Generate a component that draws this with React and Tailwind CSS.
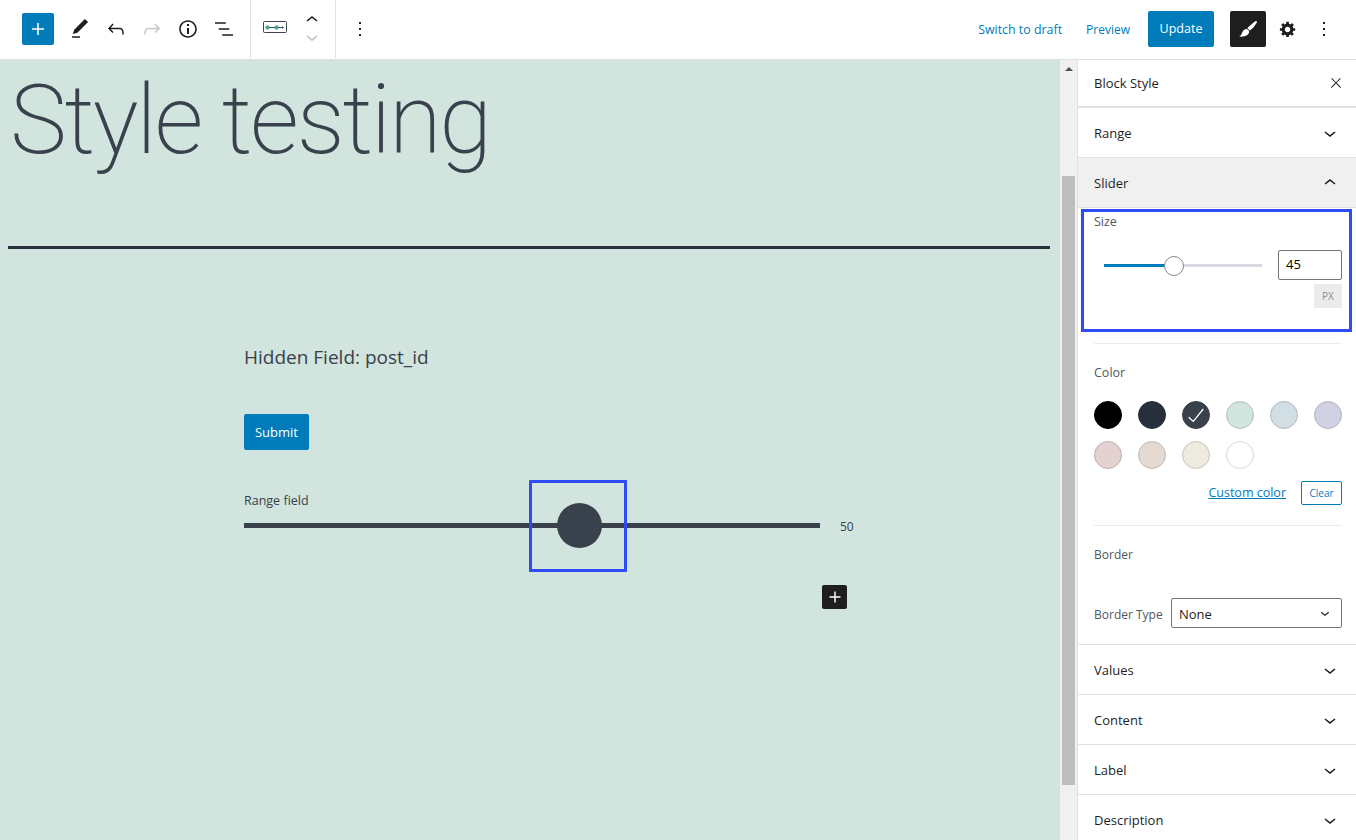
import React from 'react';

const paths = {
  plus: 'M18 11.2h-5.2V6h-1.6v5.2H6v1.6h5.2V18h1.6v-5.2H18z',
  edit: 'M20.1 5.1L16.9 2 6.2 12.7l-1.3 4.4 4.5-1.3L20.1 5.1zM4 20.8h8v-1.5H4v1.5z',
  undo: 'M18.3 11.7c-.6-.6-1.4-.9-2.3-.9H6.7l2.9-3.3-1.1-1-4.5 5L8.5 16l1-1-2.7-2.7H16c.5 0 .9.2 1.3.5 1 1 1 3.4 1 4.5v.3h1.5v-.2c0-1.5 0-4.3-1.5-5.7z',
  redo: 'M15.6 6.5l-1.1 1 2.9 3.3H8c-.9 0-1.7.3-2.3.9-1.4 1.5-1.4 4.2-1.4 5.6v.2h1.5v-.3c0-1.1 0-3.5 1-4.5.3-.3.7-.5 1.3-.5h9.2L14.5 15l1.1 1.1 4.6-4.6-4.6-5z',
  info: 'M12 3.2c-4.8 0-8.8 3.9-8.8 8.8 0 4.8 3.9 8.8 8.8 8.8 4.8 0 8.8-3.9 8.8-8.8 0-4.8-4-8.8-8.8-8.8zm0 16c-4 0-7.2-3.3-7.2-7.2C4.8 8 8 4.8 12 4.8s7.2 3.3 7.2 7.2c0 4-3.2 7.2-7.2 7.2zM11 17h2v-6h-2v6zm0-8h2V7h-2v2z',
  list: 'M13.8 5.2H3v1.5h10.8V5.2zm-3.6 12v1.5H21v-1.5H10.2zm7.2-6H6.6v1.5h10.8v-1.5z',
  more: 'M13 19h-2v-2h2v2zm0-6h-2v-2h2v2zm0-6h-2V5h2v2z',
  down: 'M17.5 11.6L12 16l-5.5-4.4.9-1.2L12 14l4.5-3.6 1 1.2z',
  up: 'M6.5 12.4L12 8l5.5 4.4-.9 1.2L12 10l-4.5 3.6-1-1.2z',
  close: 'M13 11.8l6.1-6.3-1-1-6.1 6.2-6.1-6.2-1 1 6.1 6.3-6.5 6.7 1 1 6.5-6.6 6.5 6.6 1-1z',
};

function Icon({ name, className = 'w-6 h-6' }) {
  return (
    <svg viewBox="0 0 24 24" className={`fill-current shrink-0 ${className}`}>
      <path d={paths[name]} />
    </svg>
  );
}

function Gear() {
  return (
    <svg viewBox="0 0 20 20" className="w-[18px] h-[18px] fill-current shrink-0">
      <path d="M18 12h-2.18c-.17.7-.44 1.35-.81 1.93l1.54 1.54-2.1 2.1-1.54-1.54c-.58.36-1.23.63-1.91.79V19H8v-2.18c-.68-.16-1.33-.43-1.91-.79l-1.54 1.54-2.12-2.12 1.54-1.54c-.36-.58-.63-1.23-.79-1.91H1V9.03h2.17c.16-.7.44-1.35.8-1.94L2.43 5.55l2.1-2.1 1.54 1.54c.58-.37 1.24-.64 1.93-.81V2h3v2.18c.68.16 1.33.43 1.91.79l1.54-1.54 2.12 2.12-1.54 1.54c.36.59.64 1.24.8 1.94H18V12zm-8.5 1.5c1.66 0 3-1.34 3-3s-1.34-3-3-3-3 1.34-3 3 1.34 3 3 3z" />
    </svg>
  );
}

function Brush() {
  return (
    <svg viewBox="0 0 18 16" className="w-[18px] h-4 shrink-0">
      <path d="M17.6.3c.5.4.4 1.1 0 1.7-1.4 2.3-4 5.6-6.7 7.6L8.3 7.2C10.6 4.5 14 1.7 16 .4c.6-.3 1.2-.4 1.6-.1z" fill="#fff" />
      <path d="M7.6 8c1.3.4 2.3 1.4 2.5 2.6.2 2.6-2.5 5.4-9.9 5.1 1.7-.8 2.1-2 2.7-3.6.7-2 2.5-4.4 4.7-4.1z" fill="#fff" />
    </svg>
  );
}

function RangeBlockIcon() {
  return (
    <svg viewBox="0 0 24 12" className="w-6 h-3 shrink-0">
      <rect x="0.5" y="0.5" width="23" height="11" rx="1" fill="none" stroke="#3a4452" />
      <path d="M4 6.5h16" stroke="#3a4452" strokeWidth="1" />
      <path d="M19 5l2 1.5-2 1.5z" fill="#3a4452" />
      <circle cx="4.5" cy="6.5" r="1.8" fill="#2fc9a0" stroke="#3a4452" strokeWidth="0.5" />
      <circle cx="13.5" cy="6.5" r="1.8" fill="#2fc9a0" stroke="#3a4452" strokeWidth="0.5" />
    </svg>
  );
}

function PanelRow({ title, open }) {
  return (
    <div className={`h-[50px] shrink-0 flex items-center justify-between pl-4 pr-[14px] border-b border-[#e0e0e0] text-[13px] font-medium text-[#1e1e1e] ${open ? 'bg-[#f0f0f0]' : 'bg-white'}`}>
      <span className="mt-[2px]">{title}</span>
      <Icon name={open ? 'up' : 'down'} />
    </div>
  );
}

const swatches = [
  { cls: 'bg-black border-black' },
  { cls: 'bg-[#272f3d] border-[#272f3d]' },
  { cls: 'bg-[#39414d] border-[#39414d]', checked: true },
  { cls: 'bg-[#d1e4dd] border-[#b0c2bb]' },
  { cls: 'bg-[#d1dfe4] border-[#b0bcc1]' },
  { cls: 'bg-[#d1d1e4] border-[#b0b0c1]' },
  { cls: 'bg-[#e4d1d1] border-[#c1b0b0]' },
  { cls: 'bg-[#e4dad1] border-[#c1b8b0]' },
  { cls: 'bg-[#eeeadd] border-[#c9c6bb]' },
  { cls: 'bg-white border-[#d8d8d8]' },
];

export default function App() {
  return (
    <div className="w-[1356px] h-[840px] overflow-hidden flex flex-col bg-white font-['Open_Sans',sans-serif] text-[#1e1e1e]">
      {/* Top toolbar */}
      <header className="h-[60px] shrink-0 flex items-center bg-white border-b border-[#e0e0e0] pl-[22px] pr-5 pb-[1px]">
        <button className="w-8 h-8 rounded-[2px] bg-[#007cba] text-white flex items-center justify-center">
          <Icon name="plus" />
        </button>
        <div className="flex items-center gap-3 ml-[14px]">
          <Icon name="edit" />
          <Icon name="undo" />
          <Icon name="redo" className="w-6 h-6 text-[#c8c8c8]" />
          <Icon name="info" />
          <Icon name="list" />
        </div>
        <div className="self-stretch w-px bg-[#e0e0e0] ml-[14px]" />
        <div className="ml-3 mb-[4px]"><RangeBlockIcon /></div>
        <div className="flex flex-col items-center ml-[13px] w-6">
          <Icon name="up" className="w-6 h-6 -mb-[7px] -mt-[4px]" />
          <Icon name="down" className="w-6 h-6 text-[#c0c0c0] -mb-[3px]" />
        </div>
        <div className="self-stretch w-px bg-[#e0e0e0] ml-[11px]" />
        <div className="ml-3"><Icon name="more" /></div>

        <div className="ml-auto flex items-center">
          <span className="text-[#007cba] text-[12.4px] mt-[2px]">Switch to draft</span>
          <span className="text-[#007cba] text-[12px] ml-6 mt-[2px]">Preview</span>
          <button className="ml-[18px] w-[66px] h-9 rounded-[2px] bg-[#007cba] text-white text-[12.5px] font-medium pt-[1px]">Update</button>
          <button className="ml-4 w-9 h-9 rounded-[2px] bg-[#1e1e1e] flex items-center justify-center">
            <Brush />
          </button>
          <div className="ml-[10px] w-6 flex justify-center"><Gear /></div>
          <div className="ml-3"><Icon name="more" /></div>
        </div>
      </header>

      <div className="flex-1 min-h-0 flex">
        {/* Editor canvas */}
        <main className="w-[1060px] shrink-0 bg-[#d1e4dd] text-[#39414d] overflow-hidden">
          <h1 className="pl-[10px] h-[120px] text-[96px] leading-[120px] tracking-[-2.3px] font-extralight font-['Roboto',sans-serif]">Style testing</h1>
          <div className="ml-[8px] mr-[10px] mt-[66px] h-[3px] bg-[#28303d]" />
          <div className="pl-[244px] pt-[94px]">
            <p className="text-[19px] leading-[28px]">Hidden Field: post_id</p>
            <button className="mt-[43px] block w-[65px] h-9 rounded-[2px] bg-[#007cba] text-white text-[13px] font-medium pt-[1px]">Submit</button>
            <p className="mt-[42px] text-[12.5px] leading-[18px]">Range field</p>
            <div className="flex items-center mt-[6px]">
              <div className="relative w-[576px] h-[5px] bg-[#39414d]">
                <div className="absolute left-[313px] top-[-20px] w-[45px] h-[45px] rounded-full bg-[#39414d]" />
                <div className="absolute left-[285px] top-[-43px] w-[98px] h-[92px] border-[3px] border-[#2f4bf5] rounded-[1px]" />
              </div>
              <span className="ml-5 text-[12px] relative top-[2px]">50</span>
            </div>
            <div className="ml-[578px] mt-[51px] w-[25px] h-6 rounded-[2px] bg-[#1e1e1e] text-white flex items-center justify-center">
              <Icon name="plus" className="w-[22px] h-[22px]" />
            </div>
          </div>
        </main>

        {/* Scrollbar */}
        <div className="w-[17px] shrink-0 bg-[#f0f0f0] flex flex-col items-center">
          <div className="mt-[7px] w-0 h-0 border-x-[4px] border-x-transparent border-b-[4px] border-b-[#505050]" />
          <div className="mt-[105px] w-[13px] h-[609px] bg-[#bebebe]" />
        </div>

        {/* Sidebar */}
        <aside className="flex-1 min-w-0 border-l border-[#e0e0e0] flex flex-col bg-white">
          <div className="h-[48px] shrink-0 flex items-center justify-between pl-4 pr-3 border-b-2 border-[#e0e0e0] text-[13px] font-medium">
            <span className="mt-[2px]">Block Style</span>
            <Icon name="close" className="w-4 h-4" />
          </div>
          <PanelRow title="Range" />
          <PanelRow title="Slider" open />

          <div className="ml-[3px] mr-1 mt-[1px] h-[123px] border-[3px] border-[#2f4bf5] shrink-0 pl-[10px] pr-[7px]">
            <div className="text-[12.5px] leading-4 text-[#50575e] mt-[2px]">Size</div>
            <div className="flex items-center mt-[20px]">
              <div className="relative ml-[10px] w-[158px] h-[3px] bg-[#d7dade]">
                <div className="w-[62px] h-full bg-[#007cba]" />
                <div className="absolute left-[60px] top-[-8px] w-5 h-5 rounded-full bg-white border border-[#82878c]" />
              </div>
              <div className="ml-4 w-16 h-[30px] border border-[#757575] rounded-[2px] flex items-center pl-[7px] text-[13px] text-black">45</div>
            </div>
            <div className="ml-auto mt-1 w-7 h-6 rounded-[1px] bg-[#ebebeb] text-[10px] text-[#8f8f8f] flex items-center justify-center">PX</div>
          </div>

          <div className="ml-4 mr-[14px] mt-[11px] h-px bg-[#ececec] shrink-0" />

          <div className="pl-4 pr-[14px] shrink-0">
            <div className="mt-[21px] text-[12.5px] leading-4 text-[#50575e]">Color</div>
            <div className="mt-5 grid grid-cols-[repeat(6,28px)] gap-x-4 gap-y-3">
              {swatches.map((swatch, idx) => (
                <div key={idx} className={`w-7 h-7 rounded-full border ${swatch.cls}`}>
                  {swatch.checked && (
                    <svg viewBox="0 0 28 28" className="w-7 h-7 -m-px">
                      <path d="M6.7 16.2l4.6 4.2L21.3 8" fill="none" stroke="#fff" strokeWidth="1.3" />
                    </svg>
                  )}
                </div>
              ))}
            </div>
            <div className="mt-3 flex items-center justify-end">
              <span className="text-[12.5px] text-[#007cba] underline">Custom color</span>
              <span className="ml-[15px] w-[41px] h-6 rounded-[2px] border border-[#007cba] text-[#007cba] text-[10px] flex items-center justify-center">Clear</span>
            </div>
            <div className="mt-5 h-px bg-[#ececec]" />
            <div className="mt-[21px] text-[12px] leading-4 text-[#50575e]">Border</div>
            <div className="mt-[35px] flex items-center">
              <span className="text-[12px] text-[#50575e] w-[77px] mt-[4px]">Border Type</span>
              <div className="flex-1 h-[30px] border border-[#757575] rounded-[2px] flex items-center justify-between pl-[7px] pr-[7px] text-[13px] text-[#1e1e1e]">
                <span className="mt-[3px]">None</span>
                <Icon name="down" className="w-[18px] h-[18px]" />
              </div>
            </div>
          </div>

          <div className="mt-4 border-t border-[#e0e0e0] shrink-0">
            <PanelRow title="Values" />
            <PanelRow title="Content" />
            <PanelRow title="Label" />
            <PanelRow title="Description" />
          </div>
        </aside>
      </div>
    </div>
  );
}
